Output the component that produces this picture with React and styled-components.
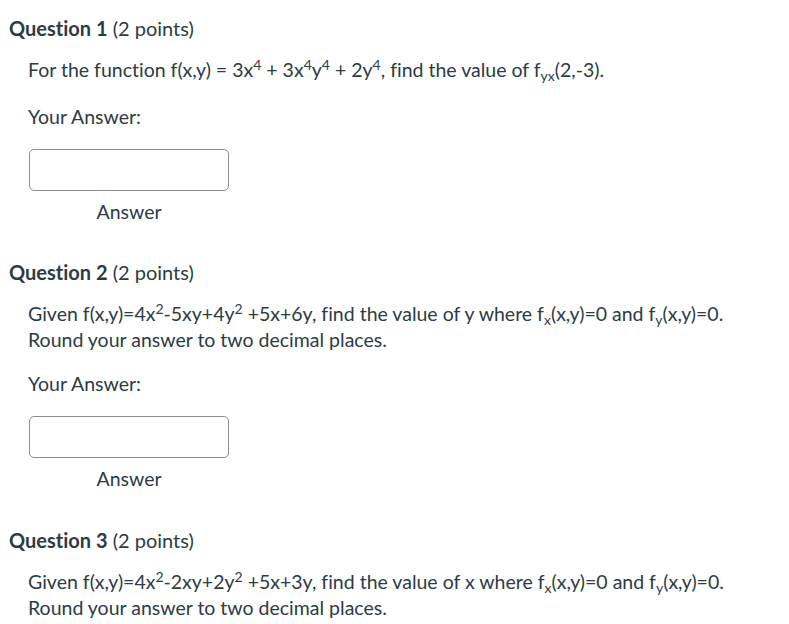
import React from 'react';
import styled, {createGlobalStyle} from "styled-components";

const Global = createGlobalStyle`
  body {
    margin: 0;
    background: #fff;
    font-family: Lato, "Open Sans", sans-serif;
    color: #2d3b45;
    font-variant-ligatures: none;
  }
`

const Page = styled.div`
  padding: 14px 0 0 9px;
`

const QuestionBlock = styled.section`
  margin-bottom: ${p => p.$gap || 0}px;
`

const Heading = styled.h3`
  margin: 0;
  font-size: 20px;
  line-height: 28px;
  font-weight: 400;

  & b {
    font-weight: 700;
  }
`

const Body = styled.div`
  padding-left: 19px;
  margin-top: 15px;
  font-size: 19.5px;
  line-height: 26px;

  & p {
    margin: 0;
  }

  & sup {
    font-size: 14px;
    line-height: 0;
    vertical-align: 7px;
  }

  & sub {
    font-size: 14px;
    line-height: 0;
    vertical-align: -4px;
  }
`

const Label = styled.p`
  margin-top: ${p => p.$top || 18}px !important;
`

const AnswerBox = styled.div`
  display: inline-flex;
  flex-direction: column;
  align-items: center;
  margin-top: 19px;
  margin-left: 1px;
`

const Input = styled.input`
  width: 200px;
  height: 42px;
  box-sizing: border-box;
  border: 1px solid #8a9095;
  border-radius: 5px;
  background: #fff;
`

const AnswerLabel = styled.span`
  margin-top: 8px;
  font-size: 19.5px;
  line-height: 26px;
`

function Answer() {
  return (
    <AnswerBox>
      <Input type="text" />
      <AnswerLabel>Answer</AnswerLabel>
    </AnswerBox>
  );
}

function App() {
  return (
    <Page>
      <Global />
      <QuestionBlock $gap={33}>
        <Heading><b>Question 1</b> (2 points)</Heading>
        <Body>
          <p>For the function f(x,y) = 3x<sup>4</sup> + 3x<sup>4</sup>y<sup>4</sup> + 2y<sup>4</sup>, find the value of f<sub>yx</sub>(2,-3).</p>
          <Label $top={21}>Your Answer:</Label>
          <Answer />
        </Body>
      </QuestionBlock>
      <QuestionBlock $gap={34}>
        <Heading><b>Question 2</b> (2 points)</Heading>
        <Body>
          <p>Given f(x,y)=4x<sup>2</sup>-5xy+4y<sup>2</sup> +5x+6y, find the value of y where f<sub>x</sub>(x,y)=0 and f<sub>y</sub>(x,y)=0.</p>
          <p>Round your answer to two decimal places.</p>
          <Label>Your Answer:</Label>
          <Answer />
        </Body>
      </QuestionBlock>
      <QuestionBlock>
        <Heading><b>Question 3</b> (2 points)</Heading>
        <Body>
          <p>Given f(x,y)=4x<sup>2</sup>-2xy+2y<sup>2</sup> +5x+3y, find the value of x where f<sub>x</sub>(x,y)=0 and f<sub>y</sub>(x,y)=0.</p>
          <p>Round your answer to two decimal places.</p>
        </Body>
      </QuestionBlock>
    </Page>
  );
}

export default App;
